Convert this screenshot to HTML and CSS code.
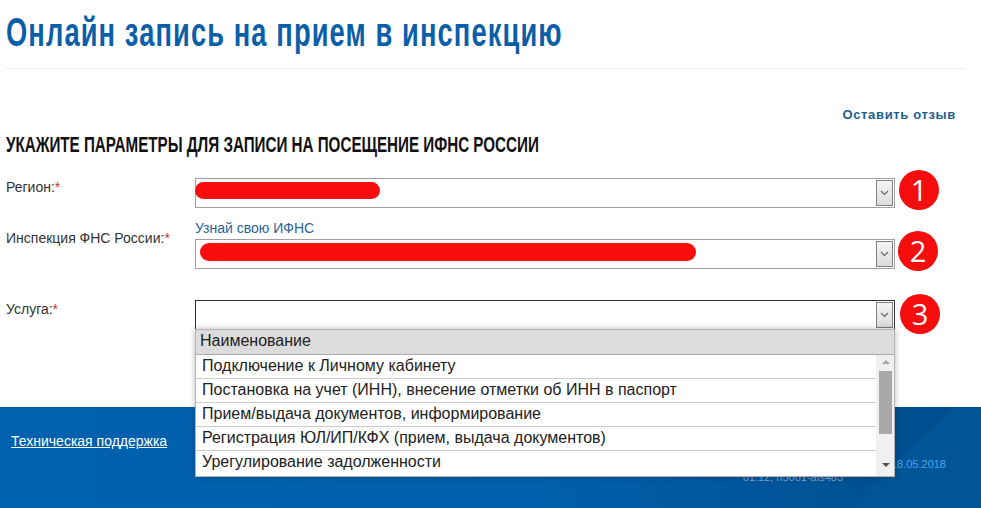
FILE: index.html
```html
<!DOCTYPE html>
<html lang="ru">
<head>
<meta charset="utf-8">
<title>Онлайн запись на прием в инспекцию</title>
<link rel="stylesheet" href="styles.css">
</head>
<body>
<main class="content">
  <h1 class="title"><span class="title-text">Онлайн запись на прием в инспекцию</span></h1>
  <div class="feedback"><a href="#">Оставить отзыв</a></div>
  <h2 class="subtitle"><span class="subtitle-text">Укажите параметры для записи на посещение ИФНС России</span></h2>
  <form class="form">
    <div class="row row-region">
      <div class="label">Регион:<span class="req">*</span></div>
      <div class="control">
        <div class="field-line">
          <div class="select">
            <span class="scribble scribble-1"></span>
            <span class="arrow"><svg width="9" height="6" viewBox="0 0 9 6"><path d="M1 1l3.500 3.500L8 1" fill="none" stroke="#666" stroke-width="1.200"/></svg></span>
          </div>
          <span class="badge badge-1">1</span>
        </div>
      </div>
    </div>
    <div class="row row-inspect">
      <div class="label label-inspect">Инспекция ФНС России:<span class="req">*</span></div>
      <div class="control">
        <a class="hint" href="#">Узнай свою ИФНС</a>
        <div class="field-line">
          <div class="select">
            <span class="scribble scribble-2"></span>
            <span class="arrow"><svg width="9" height="6" viewBox="0 0 9 6"><path d="M1 1l3.500 3.500L8 1" fill="none" stroke="#666" stroke-width="1.200"/></svg></span>
          </div>
          <span class="badge badge-2">2</span>
        </div>
      </div>
    </div>
    <div class="row row-service">
      <div class="label">Услуга:<span class="req">*</span></div>
      <div class="control">
        <div class="field-line">
          <div class="select select-open">
            <span class="arrow"><svg width="9" height="6" viewBox="0 0 9 6"><path d="M1 1l3.500 3.500L8 1" fill="none" stroke="#666" stroke-width="1.200"/></svg></span>
          </div>
          <span class="badge badge-3">3</span>
        </div>
      </div>
    </div>
  </form>
</main>
<div class="dropdown">
  <div class="dd-head">Наименование</div>
  <div class="dd-body">
    <ul class="dd-list">
      <li>Подключение к Личному кабинету</li>
      <li>Постановка на учет (ИНН), внесение отметки об ИНН в паспорт</li>
      <li>Прием/выдача документов, информирование</li>
      <li>Регистрация ЮЛ/ИП/КФХ (прием, выдача документов)</li>
      <li>Урегулирование задолженности</li>
    </ul>
    <div class="scrollbar">
      <span class="sb-up"></span>
      <span class="sb-thumb"></span>
      <span class="sb-down"></span>
    </div>
  </div>
</div>
<footer class="footer">
  <a class="support" href="#">Техническая поддержка</a>
  <div class="meta">
    <div class="date">18.05.2018</div>
    <div class="version">01.12, n5001-ais483</div>
  </div>
</footer>
</body>
</html>
```

FILE: styles.css
```css
html, body {
  margin: 0;
  padding: 0;
}
body {
  width: 981px;
  height: 508px;
  overflow: hidden;
  position: relative;
  background: #fff;
  font-family: "Liberation Sans", Arial, sans-serif;
  font-size: 14px;
  color: #333;
}
.content {
  height: 407px;
  padding: 0 16px 0 6px;
  box-sizing: border-box;
}
.title {
  margin: 0;
  padding: 10px 0 14px;
  height: 44px;
  line-height: 44px;
  box-sizing: content-box;
  border-bottom: 1px solid #ececec;
  font-size: 40px;
  font-weight: 700;
  letter-spacing: 1.600px;
  color: #0b5fa9;
  white-space: nowrap;
}
.title-text {
  display: inline-block;
  transform: scaleX(0.683);
  transform-origin: 0 50%;
}
.feedback {
  margin-top: 37px;
  padding-right: 9px;
  text-align: right;
  line-height: 16px;
}
.feedback a {
  color: #1a5f92;
  font-weight: 700;
  font-size: 13px;
  letter-spacing: 0.65px;
  text-decoration: none;
}
.subtitle {
  margin: 10px 0 0;
  font-size: 22px;
  line-height: 24px;
  font-weight: 700;
  text-transform: uppercase;
  color: #111;
  white-space: nowrap;
}
.subtitle-text {
  display: inline-block;
  transform: scaleX(0.69);
  transform-origin: 0 50%;
}
.form {
  margin-top: 21px;
}
.row {
  display: flex;
}
.row-inspect {
  margin-top: 13px;
}
.row-service {
  margin-top: 31px;
}
.label {
  width: 189px;
  flex: none;
  line-height: 16px;
  padding-top: 1px;
}
.label-inspect {
  padding-top: 9px;
}
.req {
  color: #c33;
}
.hint {
  display: block;
  height: 18px;
  line-height: 14px;
  color: #2a6496;
  text-decoration: none;
}
.field-line {
  display: flex;
  align-items: center;
}
.select {
  position: relative;
  width: 700px;
  height: 30px;
  box-sizing: border-box;
  border: 1px solid #a0a0a0;
  background: #fff;
  display: flex;
  justify-content: flex-end;
  align-items: center;
  padding-right: 1px;
}
.select-open {
  border-color: #333;
}
.arrow {
  width: 17px;
  height: 26px;
  box-sizing: border-box;
  border: 1px solid #808080;
  background: linear-gradient(#f4f4f4, #dcdcdc);
  display: flex;
  align-items: center;
  justify-content: center;
}
.scribble {
  position: absolute;
  background: #fb0d0d;
  border-radius: 9px;
}
.scribble-1 {
  left: -1px;
  top: 3px;
  width: 185px;
  height: 17px;
}
.scribble-2 {
  left: 4px;
  top: 3px;
  width: 496px;
  height: 18px;
}
.badge {
  flex: none;
  width: 40px;
  height: 40px;
  margin: -5px 0;
  border-radius: 50%;
  background: #f40d0d;
  color: #fff;
  font-family: "Open Sans", sans-serif;
  font-size: 29px;
  line-height: 40px;
  text-align: center;
}
.badge-1 {
  margin-left: 4px;
  transform: translateY(-3px);
}
.badge-2 {
  margin-left: 3px;
  transform: translateY(-3px);
}
.badge-3 {
  margin-left: 5px;
  transform: translateY(-1px);
}
.dropdown {
  position: absolute;
  left: 195px;
  top: 329px;
  width: 700px;
  height: 148px;
  box-sizing: border-box;
  background: #fff;
  border: 1px solid #b4b4b4;
  box-shadow: 0 0 6px rgba(0, 0, 0, 0.28);
  font-size: 16px;
  color: #222;
  display: flex;
  flex-direction: column;
  z-index: 2;
}
.dd-head {
  height: 24px;
  flex: none;
  line-height: 21px;
  padding-left: 4px;
  background: #dcdcdc;
  border-bottom: 1px solid #aaa;
}
.dd-body {
  flex: 1;
  display: flex;
  min-height: 0;
}
.dd-list {
  flex: 1;
  margin: 0;
  padding: 0;
  list-style: none;
}
.dd-list li {
  height: 24px;
  box-sizing: border-box;
  line-height: 21px;
  padding-left: 6px;
  border-bottom: 1px solid #ccc;
  white-space: nowrap;
}
.dd-list li:last-child {
  border-bottom: 0;
}
.scrollbar {
  width: 18px;
  flex: none;
  padding: 0 2px 0 3px;
  box-sizing: border-box;
  background: #f0f0f0;
  display: flex;
  flex-direction: column;
  align-items: center;
}
.sb-up {
  flex: none;
  width: 0;
  height: 0;
  margin-top: 5px;
  border-left: 4px solid transparent;
  border-right: 4px solid transparent;
  border-bottom: 4px solid #a3a3a3;
}
.sb-thumb {
  flex: none;
  width: 13px;
  height: 63px;
  margin-top: 7px;
  background: #a8a8a8;
}
.sb-down {
  flex: none;
  width: 0;
  height: 0;
  margin-top: 29px;
  border-left: 4px solid transparent;
  border-right: 4px solid transparent;
  border-top: 4px solid #505050;
}
.footer {
  height: 101px;
  box-sizing: border-box;
  padding: 26px 35px 0 11px;
  display: flex;
  justify-content: space-between;
  background:
    linear-gradient(135deg, transparent 88%, #005596 88.300%),
    linear-gradient(90deg, #0061ae 0%, #0060ab 55%, #004c8b 100%);
}
.support {
  color: #fff;
  font-size: 14px;
  line-height: 16px;
  height: 16px;
}
.meta {
  padding-top: 25px;
  text-align: right;
  font-size: 11px;
  line-height: 13px;
}
.date {
  color: #4aa3e6;
}
.version {
  margin: 0 103px 0 0;
  color: #7fa6cc;
}
```
